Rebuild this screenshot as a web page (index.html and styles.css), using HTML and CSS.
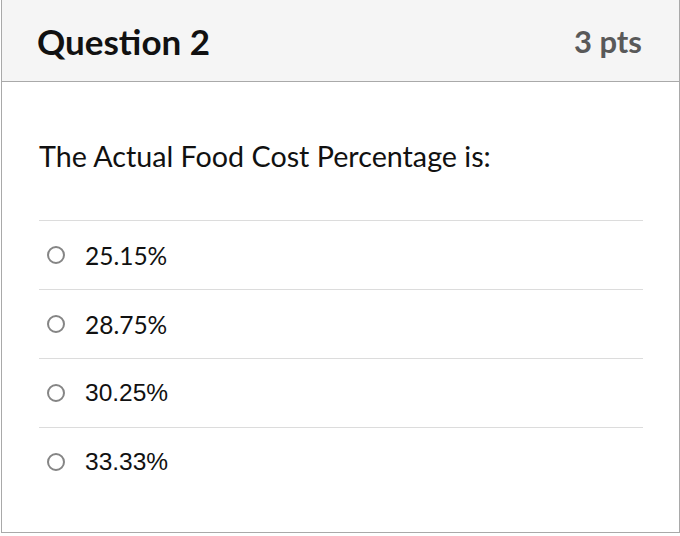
FILE: index.html
```html
<!DOCTYPE html>
<html>
<head>
<meta charset="utf-8">
<link rel="stylesheet" href="styles.css">
</head>
<body>
<div class="card">
  <div class="header">
    <div class="title">Question 2</div>
    <div class="pts">3 pts</div>
  </div>
  <div class="body">
    <div class="question">The Actual Food Cost Percentage is:</div>
    <div class="answers">
      <div class="answer"><span class="radio"></span><span class="label lato">25.15%</span></div>
      <div class="answer"><span class="radio"></span><span class="label lato">28.75%</span></div>
      <div class="answer"><span class="radio"></span><span class="label arial">30.25%</span></div>
      <div class="answer"><span class="radio"></span><span class="label arial">33.33%</span></div>
    </div>
  </div>
</div>
</body>
</html>
```
FILE: styles.css
```css
html, body {
  margin: 0;
  padding: 0;
  background: #ffffff;
}
body {
  font-family: Lato, "Liberation Sans", sans-serif;
  color: #111;
}
.card {
  box-sizing: border-box;
  margin-left: 1px;
  width: 679px;
  height: 533px;
  border: 1px solid #a9a9a9;
  border-top: none;
  display: flex;
  flex-direction: column;
}
.header {
  box-sizing: border-box;
  height: 82px;
  background: #f5f5f5;
  border-bottom: 1px solid #a9a9a9;
  display: flex;
  align-items: center;
  justify-content: space-between;
  padding: 0 37px 0 35px;
}
.title {
  font-weight: 700;
  font-size: 35px;
  color: #111;
}
.pts {
  font-weight: 700;
  font-size: 31px;
  color: #595959;
}
.body {
  padding: 0 36px 0 37px;
}
.question {
  font-size: 28.7px;
  color: #111;
  padding-top: 54px;
  line-height: 40px;
  padding-bottom: 44px;
}
.answer {
  border-top: 1px solid #dcdcdc;
  height: 68px;
  display: flex;
  align-items: center;
  gap: 20px;
  padding-left: 8px;
}
.radio {
  box-sizing: border-box;
  display: block;
  width: 18px;
  height: 18px;
  border-radius: 50%;
  border: 2px solid #858585;
  background: #fff;
  flex: none;
}
.label {
  font-size: 24.5px;
  color: #111;
}
.lato { font-family: Lato, sans-serif; }
.arial { font-family: "Liberation Sans", Arial, sans-serif; }
```
